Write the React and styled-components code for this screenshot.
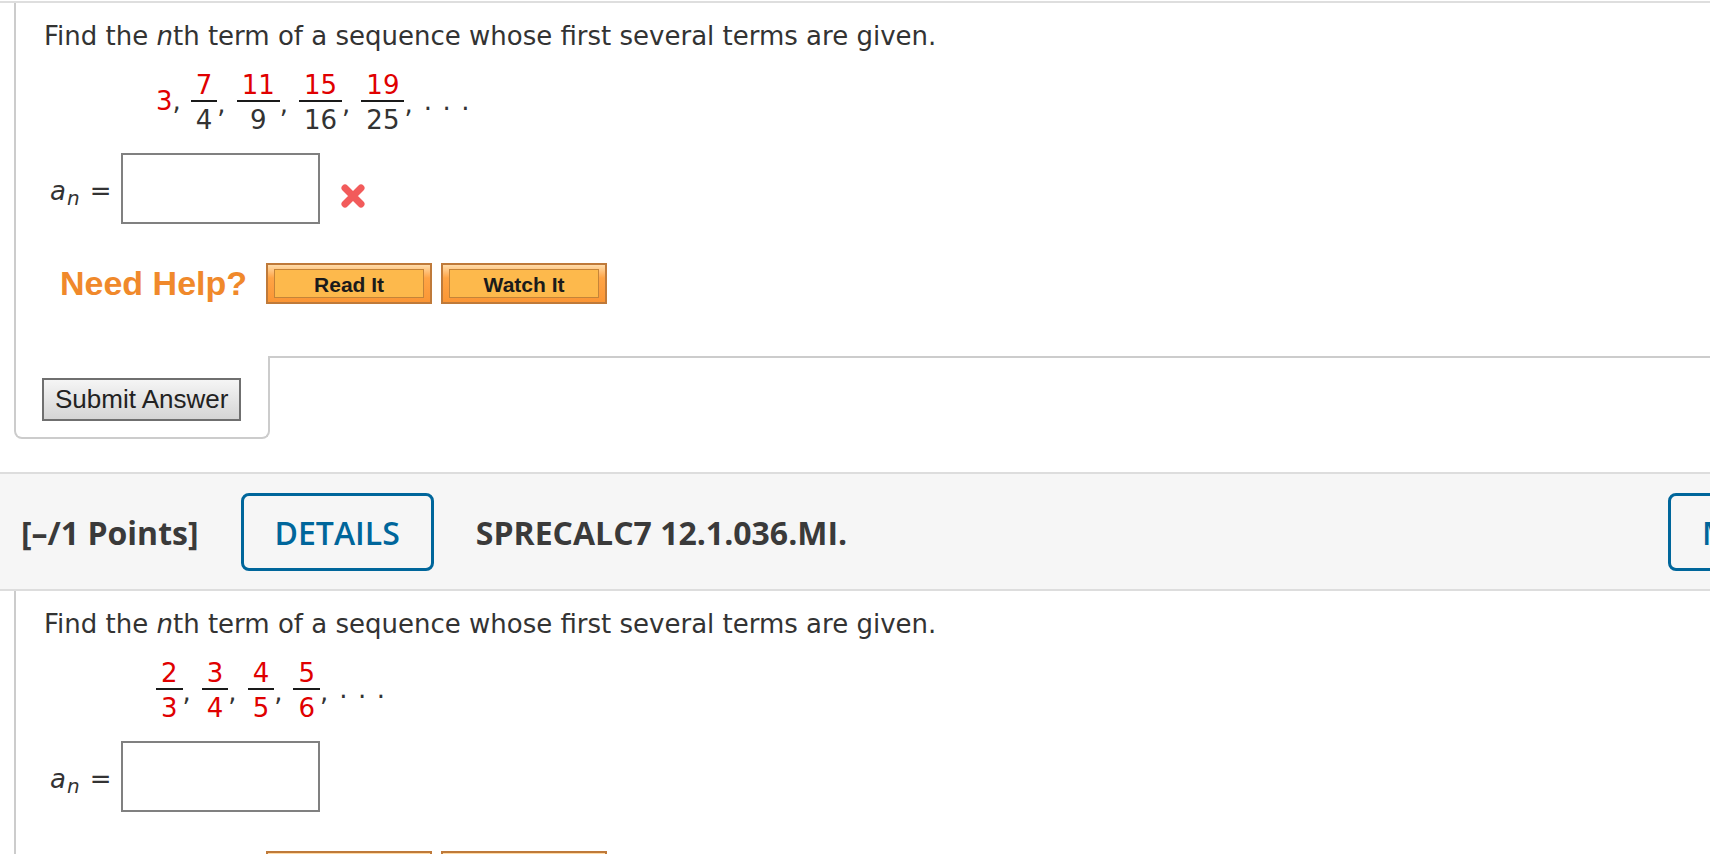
import React from "react";
import styled, { createGlobalStyle } from "styled-components";

const problems = [
  {
    id: 1,
    lead: "3",
    terms: [
      ["7", "4"],
      ["11", "9"],
      ["15", "16"],
      ["19", "25"],
    ],
    redDen: false,
    wrong: true,
  },
  {
    id: 2,
    lead: null,
    terms: [
      ["2", "3"],
      ["3", "4"],
      ["4", "5"],
      ["5", "6"],
    ],
    redDen: true,
    wrong: false,
  },
];

const GlobalStyle = createGlobalStyle`
  html, body {
    margin: 0;
    padding: 0;
    background: #ffffff;
    overflow: hidden;
  }
  body {
    font-family: "DejaVu Sans", Verdana, sans-serif;
  }
`;

const Page = styled.div`
  width: 1960px;
`;

const TopRule = styled.div`
  height: 2px;
  margin-top: 1px;
  background: #dedede;
`;

const Body = styled.div`
  margin-left: 14px;
  padding: 18px 0 52px 28px;
  border-left: 2px solid #cccccc;
`;

const Prompt = styled.p`
  margin: 0;
  font-size: 26px;
  line-height: 30px;
  color: #333333;
`;

const Seq = styled.div`
  display: flex;
  align-items: flex-start;
  margin: 21px 0 0 112px;
  font-size: 26px;
  line-height: 26px;
  color: #333333;
`;

const Lead = styled.span`
  margin-top: 16px;
  margin-right: 10px;
`;

const Red = styled.span`
  color: #e00000;
`;

const Frac = styled.span`
  display: flex;
  flex-direction: column;
  text-align: center;
`;

const Top = styled.span`
  padding: 0 5px;
  color: #e00000;
`;

const Bar = styled.span`
  height: 2px;
  margin-top: 2px;
  background: #1a1a1a;
`;

const Bottom = styled.span`
  padding: 0 5px;
  margin-top: 5px;
  color: ${(p) => (p.$red ? "#e00000" : "#333333")};
`;

const Comma = styled.span`
  margin-top: 19px;
  margin-right: 11px;
`;

const Dots = styled.span`
  margin-top: 16px;
  letter-spacing: 10.5px;
`;

const AnswerRow = styled.div`
  display: flex;
  align-items: center;
  margin-top: 20px;
`;

const Label = styled.span`
  display: inline-block;
  margin-left: 6px;
  padding-top: 7px;
  font-size: 26px;
  line-height: 30px;
  color: #333333;
`;

const Sub = styled.i`
  margin-left: 1px;
  font-size: 20px;
  line-height: 1;
  vertical-align: -5px;
`;

const Eq = styled.span`
  margin-left: 10px;
`;

const AnswerBox = styled.input`
  box-sizing: border-box;
  width: 199px;
  height: 71px;
  margin: 0 0 0 10px;
  padding: 0 8px;
  border: 2px solid #808080;
  border-radius: 0;
  outline: none;
  background: #ffffff;
  font-size: 26px;
`;

const WrongMark = styled.svg`
  margin-left: 20px;
  margin-top: 14px;
`;

const HelpRow = styled.div`
  display: flex;
  align-items: center;
  gap: 9px;
  margin: 39px 0 0 16px;
`;

const HelpLabel = styled.span`
  margin-right: 10px;
  font-family: "Liberation Sans", Arial, sans-serif;
  font-weight: bold;
  font-size: 34px;
  line-height: 37px;
  color: #f0892b;
`;

const HelpButton = styled.button`
  box-sizing: border-box;
  display: flex;
  width: 166px;
  height: 41px;
  padding: 4px 6px;
  border: 2px solid #bf7a3a;
  border-radius: 0;
  background: linear-gradient(#ffdcaa 0%, #ffa445 35%, #fb9635 100%);
  cursor: pointer;
`;

const Face = styled.span`
  box-sizing: border-box;
  flex: 1;
  display: flex;
  align-items: center;
  justify-content: center;
  padding-top: 2px;
  border: 1px solid #c58438;
  background: #fdb94c;
  font-family: "Liberation Sans", Arial, sans-serif;
  font-weight: bold;
  font-size: 21px;
  color: #1b1b1b;
`;

const Footer = styled.div`
  display: flex;
  margin-left: 14px;
`;

const SubmitTab = styled.div`
  padding: 22px 27px 16px 26px;
  border: 2px solid #cccccc;
  border-top: none;
  border-radius: 0 0 8px 8px;
`;

const Filler = styled.div`
  flex: 1;
  border-top: 2px solid #cccccc;
`;

const SubmitButton = styled.button`
  box-sizing: border-box;
  height: 43px;
  padding: 0 11px;
  border: 2px solid #6f6f6f;
  border-radius: 0;
  background: linear-gradient(#f5f5f5, #d5d5d5);
  font-family: "Liberation Sans", Arial, sans-serif;
  font-size: 26px;
  color: #222222;
  cursor: pointer;
`;

const Header = styled.div`
  display: flex;
  align-items: center;
  gap: 42px;
  margin-top: 33px;
  padding: 19px 62px 18px 21px;
  background: #f6f6f6;
  border-top: 2px solid #dddddd;
  border-bottom: 2px solid #dddddd;
  font-family: "Open Sans", sans-serif;
`;

const HeaderText = styled.span`
  font-weight: 700;
  font-size: 32px;
  color: #3a3a3a;
`;

const OutlineButton = styled.button`
  box-sizing: border-box;
  display: flex;
  align-items: center;
  justify-content: center;
  height: 78px;
  padding: 0 31px;
  border: 3px solid #00669b;
  border-radius: 8px;
  background: transparent;
  font-family: "Open Sans", sans-serif;
  font-weight: 600;
  font-size: 32px;
  color: #00669b;
  cursor: pointer;
`;

const NotesButton = styled(OutlineButton)`
  width: 230px;
  margin-left: auto;
  justify-content: flex-start;
  white-space: nowrap;
`;

function Sequence({ lead, terms, redDen }) {
  return (
    <Seq>
      {lead && (
        <Lead>
          <Red>{lead}</Red>,
        </Lead>
      )}
      {terms.map(([n, d], i) => (
        <React.Fragment key={i}>
          <Frac>
            <Top>{n}</Top>
            <Bar />
            <Bottom $red={redDen}>{d}</Bottom>
          </Frac>
          <Comma>,</Comma>
        </React.Fragment>
      ))}
      <Dots>...</Dots>
    </Seq>
  );
}

function Problem({ problem }) {
  return (
    <section>
      <Body>
        <Prompt>
          Find the <i>n</i>th term of a sequence whose first several terms are given.
        </Prompt>
        <Sequence lead={problem.lead} terms={problem.terms} redDen={problem.redDen} />
        <AnswerRow>
          <Label>
            <i>a</i>
            <Sub>n</Sub>
            <Eq>=</Eq>
          </Label>
          <AnswerBox type="text" aria-label="answer" />
          {problem.wrong && (
            <WrongMark width="26" height="26" viewBox="0 0 26 26">
              <path
                d="M5 5 L21 21 M21 5 L5 21"
                stroke="#f25b5b"
                strokeWidth="7"
                strokeLinecap="round"
                fill="none"
              />
            </WrongMark>
          )}
        </AnswerRow>
        <HelpRow>
          <HelpLabel>Need Help?</HelpLabel>
          <HelpButton>
            <Face>Read It</Face>
          </HelpButton>
          <HelpButton>
            <Face>Watch It</Face>
          </HelpButton>
        </HelpRow>
      </Body>
      <Footer>
        <SubmitTab>
          <SubmitButton>Submit Answer</SubmitButton>
        </SubmitTab>
        <Filler />
      </Footer>
    </section>
  );
}

export default function App() {
  return (
    <Page>
      <GlobalStyle />
      <TopRule />
      <Problem problem={problems[0]} />
      <Header>
        <HeaderText>[–/1 Points]</HeaderText>
        <OutlineButton>DETAILS</OutlineButton>
        <HeaderText>SPRECALC7 12.1.036.MI.</HeaderText>
        <NotesButton>MY NOTES</NotesButton>
      </Header>
      <Problem problem={problems[1]} />
    </Page>
  );
}
